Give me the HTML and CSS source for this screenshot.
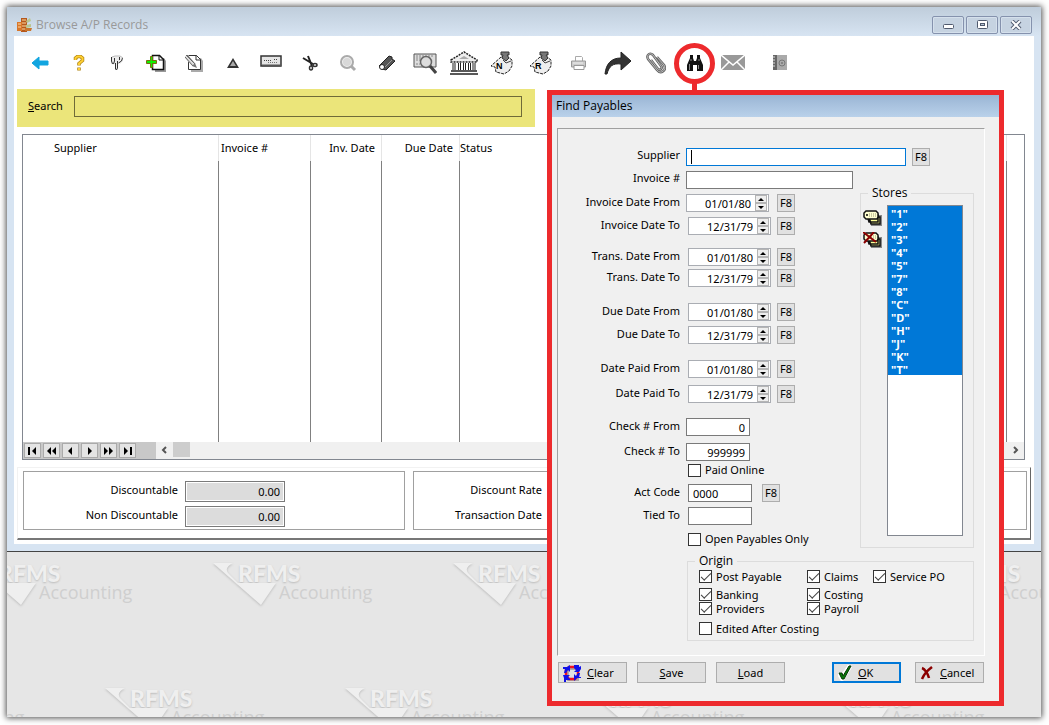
FILE: index.html
```html
<!DOCTYPE html>
<html lang="en">
<head>
<meta charset="UTF-8" />
<title>Browse A/P Records</title>
<link rel="stylesheet" href="styles.css">
</head>
<body>

<div class="screen">
  <main class="window">
    <header class="titlebar">
      <svg class="app-icon" width="16" height="16" viewBox="0 0 16 16">
        <path d="M5 1h6v14H5z" fill="#b5581c"/><path d="M1 5h5v9H1z" fill="#d9772b"/>
        <path d="M6 3h4M6 6h4M6 9h4M6 12h4M2 7h3M2 10h3" stroke="#ffd9a0"/>
        <path d="M10 4l4-3 1 3-4 2zM10 8l5-1v3l-5 1z" fill="#b9c58f"/><path d="M9 11h7l-1 3H9z" fill="#c9762e"/>
      </svg>
      <h1>Browse A/P Records</h1>
      <div class="win-buttons">
        <button type="button" aria-label="Minimize"><svg width="12" height="10" viewBox="0 0 12 10"><rect x="1.500" y="4.500" width="10" height="4" rx="1" fill="#fff" stroke="#505a6e"/></svg></button>
        <button type="button" aria-label="Maximize"><svg width="12" height="10" viewBox="0 0 12 10"><rect x="1.500" y=".5" width="10" height="8" rx="1" fill="#fff" stroke="#505a6e"/><rect x="4.500" y="3.500" width="4" height="2" fill="#b8c6d6" stroke="#505a6e"/></svg></button>
        <button type="button" aria-label="Close"><svg width="12" height="10" viewBox="0 0 12 10"><path d="M2 1l8 8M10 1L2 9" stroke="#505a6e" stroke-width="4"/><path d="M2 1l8 8M10 1L2 9" stroke="#fff" stroke-width="2"/></svg></button>
      </div>
    </header>

    <div class="content">
      <nav class="toolbar">
        <button type="button" aria-label="Back"><svg width="18" height="14" viewBox="0 0 18 14"><path d="M1 7l7-6v4h9v4H8v4z" fill="#12a5e0" stroke="#12a5e0"/></svg></button>
        <button type="button" aria-label="Help"><svg width="12" height="16" viewBox="0 0 12 16"><path d="M2.500 5V3l2-1.500h3L9.500 3v2.500L6 8.500V10.500M6 12.500v3" fill="none" stroke="#b08410" stroke-width="3.500"/><path d="M2.500 5V3l2-1.500h3L9.500 3v2.500L6 8.500V10M6 13v2" fill="none" stroke="#ffd034" stroke-width="2"/></svg></button>
        <button type="button" aria-label="Select"><svg width="14" height="16" viewBox="0 0 14 16"><path d="M1 3l2-2h7l3 2v3l-3 3-2-1-1 5-1 2-1-2V9L3 10 1 7z" fill="#eee"/><path d="M1.500 2v4l1 3M4.500 3v3l-1 3M5.500 8v6l1 1 1-2V6M8.500 8l3-2 1-3M9.500 2v3" fill="none" stroke="#333"/><path d="M2 2l3-1h5l3 2" fill="none" stroke="#bbb"/></svg></button>
        <button type="button" aria-label="Insert"><svg width="20" height="18" viewBox="0 0 20 18"><path d="M9 4h9l2 3v11H9z" fill="#999"/><path d="M6.500 1.500h7l4 4v10h-11z" fill="#fff" stroke="#111" stroke-width="1.500"/><path d="M13 1v5h5" fill="none" stroke="#111"/><path d="M4.500 2.500h2v4h4v3h-4v4h-2v-4h-4v-3h4z" fill="#10f000" stroke="#7c6a10"/></svg></button>
        <button type="button" aria-label="Change"><svg width="18" height="18" viewBox="0 0 18 18"><path d="M6 4h10l2 3v11H6z" fill="#aaa"/><path d="M3.500 1.500h8l4 4v10h-12z" fill="#fff" stroke="#333"/><path d="M11 1v5h5" fill="none" stroke="#333"/><path d="M0 2l3-1 7 8-3 3-7-8z" fill="#ddd"/><path d="M1 1l9 9M0 3l8 9M2 1l8 9" stroke="#666"/><path d="M7 12l3-3 2 5z" fill="#777"/></svg></button>
        <button type="button" aria-label="Delete"><svg width="14" height="12" viewBox="0 0 14 12"><path d="M7 1l6 10H1z" fill="#333"/><path d="M7 4l3 5H4z" fill="#aaa"/></svg></button>
        <button type="button" aria-label="Check"><svg class="up" width="22" height="12" viewBox="0 0 22 12"><path d="M1 1h20v10H1z" fill="#e5e5e5" stroke="#333" stroke-width="1.500"/><path d="M4 5.500h8M14 4.500h4" stroke="#444" stroke-dasharray="1 1"/><path d="M8 7.500h10" stroke="#777" stroke-dasharray="1 1"/><path d="M2 10.500h19" stroke="#555" stroke-width="2"/></svg></button>
        <button type="button" aria-label="Cut"><svg width="16" height="16" viewBox="0 0 16 16"><path d="M1 3l10 6M6 1l4 10" stroke="#222" stroke-width="2"/><ellipse cx="13" cy="10" rx="2" ry="1.500" fill="none" stroke="#333" stroke-width="1.500"/><ellipse cx="9" cy="13" rx="1.500" ry="2" fill="none" stroke="#333" stroke-width="1.500"/></svg></button>
        <button type="button" aria-label="Preview"><svg width="18" height="18" viewBox="0 0 18 18"><circle cx="8" cy="8" r="6" fill="#eee" stroke="#aaa" stroke-width="2"/><circle cx="8" cy="8" r="4" fill="#d8d8d8"/><path d="M12 12l4 4" stroke="#aaa" stroke-width="3"/></svg></button>
        <button type="button" aria-label="Journal"><svg width="18" height="16" viewBox="0 0 18 16"><path d="M1 11L11 1l3 1v2l3 2-9 9-4-1z" fill="#555" stroke="#222"/><path d="M7 12l7-7" stroke="#999"/><circle cx="4" cy="12" r="2.500" fill="#fff" stroke="#222"/></svg></button>
        <button type="button" aria-label="View check"><svg width="24" height="22" viewBox="0 0 24 22"><path d="M1 2h22v13H1z" fill="#ddd" stroke="#555"/><path d="M3 4h18M3 6h6M3 8h4M3 12h4" stroke="#888" stroke-dasharray="2 1"/><circle cx="13" cy="10" r="5.500" fill="#ddd" stroke="#666" stroke-width="1.500"/><path d="M17 14l6 7" stroke="#444" stroke-width="3"/></svg></button>
        <button type="button" aria-label="Bank"><svg width="28" height="24" viewBox="0 0 28 24"><path d="M1 9l13-8 13 8v2H1z" fill="#eee" stroke="#222" stroke-width="1.500" stroke-dasharray="2 1"/><path d="M9 8l5-3 5 3z" fill="#aaa"/><path d="M4 12v7M9.500 12v7M14.500 12v7M19.500 12v7M24 12v7" stroke="#222" stroke-width="3"/><path d="M4 12v7M9.500 12v7M14.500 12v7M19.500 12v7M24 12v7" stroke="#fff"/><path d="M1 20h26M0 23h28" stroke="#222" stroke-width="1.500"/></svg></button>
        <button type="button" aria-label="New memo"><svg class="bag" width="24" height="24" viewBox="0 0 24 24"><path d="M11 6L1 15l4 1 1 5 8 2 5-3 3-5V9l-4-3z" fill="#eee" stroke="#222" stroke-dasharray="3 1"/><path d="M11 1h8v3h-2l2 3-3 3-4-3 1-3h-2z" fill="#777" stroke="#333"/><path d="M13 9l3 3 5-2" fill="none" stroke="#444"/><text x="6" y="18">N</text></svg></button>
        <button type="button" aria-label="Repeat memo"><svg class="bag" width="24" height="24" viewBox="0 0 24 24"><path d="M11 6L1 15l4 1 1 5 8 2 5-3 3-5V9l-4-3z" fill="#eee" stroke="#222" stroke-dasharray="3 1"/><path d="M11 1h8v3h-2l2 3-3 3-4-3 1-3h-2z" fill="#777" stroke="#333"/><path d="M13 9l3 3 5-2" fill="none" stroke="#444"/><text x="6" y="18">R</text></svg></button>
        <button type="button" aria-label="Print"><svg width="18" height="16" viewBox="0 0 18 16"><path d="M5.500 6V1.500h6l1 1V6" fill="#fff" stroke="#aaa"/><path d="M1.500 6h14v6h-14z" fill="#ccc" stroke="#999"/><path d="M4 10.500h10v4H4z" fill="#fff" stroke="#999"/><path d="M3 8h10" stroke="#eee"/></svg></button>
        <button type="button" aria-label="Forward"><svg width="28" height="24" viewBox="0 0 28 24"><path d="M1 23C2 13 7 7 17 7V1l10 9-10 9v-6C9 12 5 15 3 23z" fill="#333" stroke="#222"/></svg></button>
        <button type="button" aria-label="Attach"><svg width="20" height="22" viewBox="0 0 20 22"><path d="M5 8l7 9c2 2 5-1 3-3L7 3C4 0 0 3 2 7l9 11c4 5 10 0 7-5L11 5" fill="none" stroke="#666" stroke-width="2.500"/><path d="M5 8l7 9c2 2 5-1 3-3L7 3C4 0 0 3 2 7l9 11c4 5 10 0 7-5L11 5" fill="none" stroke="#bbb"/></svg></button>
        <button type="button" class="find" aria-label="Find"><svg width="18" height="18" viewBox="0 0 18 18"><path d="M4 1h3v3l1 3h2l1-3V1h3v3l3 7v6h-6v-6H7v6H1v-6l3-7z" fill="#111"/><path d="M3.500 10v6M12.500 11v4M5 5v2M13 5v2" stroke="#888"/></svg></button>
        <button type="button" aria-label="Mail"><svg width="24" height="15" viewBox="0 0 24 15"><path d="M0 0h24v15H0z" fill="#999"/><path d="M0 0l12 10L24 0M0 15l8-8M24 15l-8-8" fill="none" stroke="#fff" stroke-width="1.500"/></svg></button>
        <button type="button" class="apart" aria-label="Address book"><svg width="14" height="16" viewBox="0 0 14 16"><path d="M0 0h14v15H0z" fill="#aaa"/><path d="M0 0h4v15H0z" fill="#666"/><path d="M0 2h2M0 5h2M0 8h2M0 11h2" stroke="#ddd"/><circle cx="9" cy="8" r="3" fill="none" stroke="#777"/><circle cx="9" cy="8" r="1" fill="#777"/></svg></button>
      </nav>

      <div class="search">
        <label for="search"><u>S</u>earch</label>
        <input id="search" type="text">
      </div>

      <div class="browse">
        <table>
          <thead>
            <tr><th class="supplier">Supplier</th><th class="invoice">Invoice #</th><th class="inv-date">Inv. Date</th><th class="due-date">Due Date</th><th>Status</th><th class="end"></th></tr>
          </thead>
          <tbody>
            <tr><td></td><td></td><td></td><td></td><td></td><td></td></tr>
          </tbody>
        </table>
        <div class="nav-row">
          <div class="vcr">
            <button type="button" aria-label="First"><svg width="9" height="8" viewBox="0 0 9 8"><path d="M0 0h2v8H0zM8 0v8L4 4z"/></svg></button>
            <button type="button" aria-label="Page up"><svg width="11" height="8" viewBox="0 0 11 8"><path d="M5 0v8L1 4zM10 0v8L6 4z"/></svg></button>
            <button type="button" aria-label="Previous"><svg width="8" height="8" viewBox="0 0 8 8"><path d="M5 0v8L1 4z"/></svg></button>
            <button type="button" aria-label="Next"><svg width="8" height="8" viewBox="0 0 8 8"><path d="M2 0v8l4-4z"/></svg></button>
            <button type="button" aria-label="Page down"><svg width="11" height="8" viewBox="0 0 11 8"><path d="M1 0v8l4-4zM6 0v8l4-4z"/></svg></button>
            <button type="button" aria-label="Last"><svg width="9" height="8" viewBox="0 0 9 8"><path d="M1 0v8l4-4zM7 0h2v8H7z"/></svg></button>
          </div>
          <div class="scrollbar">
            <svg width="17" height="16" viewBox="0 0 17 16"><path d="M10 5L7 8l3 3" fill="none" stroke="#555" stroke-width="2"/></svg>
            <span class="thumb"></span>
            <svg class="right" width="17" height="16" viewBox="0 0 17 16"><path d="M7 5l3 3-3 3" fill="none" stroke="#555" stroke-width="2"/></svg>
          </div>
        </div>
      </div>

      <div class="summary">
        <div class="box amounts">
          <label for="disc">Discountable</label><input id="disc" type="text" value="0.00" readonly>
          <label for="nondisc">Non Discountable</label><input id="nondisc" type="text" value="0.00" readonly>
        </div>
        <div class="box rates">
          <span>Discount Rate</span>
          <span>Transaction Date</span>
        </div>
      </div>
    </div>
  </main>

  <div class="desktop" aria-hidden="true">
    <div class="marks">
      <div class="mark"><svg width="64" height="44" viewBox="0 0 64 44"><path d="M0 0h20q-10 5-4 11l9 9h38L48 42z"/></svg><b>RFMS</b><span>Accounting</span></div>
      <div class="mark"><svg width="64" height="44" viewBox="0 0 64 44"><path d="M0 0h20q-10 5-4 11l9 9h38L48 42z"/></svg><b>RFMS</b><span>Accounting</span></div>
      <div class="mark"><svg width="64" height="44" viewBox="0 0 64 44"><path d="M0 0h20q-10 5-4 11l9 9h38L48 42z"/></svg><b>RFMS</b><span>Accounting</span></div>
      <div class="mark"></div>
      <div class="mark"><svg width="64" height="44" viewBox="0 0 64 44"><path d="M0 0h20q-10 5-4 11l9 9h38L48 42z"/></svg><b>RFMS</b><span>Accounting</span></div>
    </div>
    <div class="marks shifted">
      <div class="mark"><svg width="64" height="44" viewBox="0 0 64 44"><path d="M0 0h20q-10 5-4 11l9 9h38L48 42z"/></svg><b>RFMS</b><span>Accounting</span></div>
      <div class="mark"><svg width="64" height="44" viewBox="0 0 64 44"><path d="M0 0h20q-10 5-4 11l9 9h38L48 42z"/></svg><b>RFMS</b><span>Accounting</span></div>
      <div class="mark"><svg width="64" height="44" viewBox="0 0 64 44"><path d="M0 0h20q-10 5-4 11l9 9h38L48 42z"/></svg><b>RFMS</b><span>Accounting</span></div>
      <div class="mark"><svg width="64" height="44" viewBox="0 0 64 44"><path d="M0 0h20q-10 5-4 11l9 9h38L48 42z"/></svg><b>RFMS</b><span>Accounting</span></div>
      <div class="mark"><svg width="64" height="44" viewBox="0 0 64 44"><path d="M0 0h20q-10 5-4 11l9 9h38L48 42z"/></svg><b>RFMS</b><span>Accounting</span></div>
    </div>
  </div>

  <form class="dialog">
    <h2>Find Payables</h2>
    <div class="panel">
      <div class="group">
        <div class="row wide"><label for="supplier">Supplier</label><input id="supplier" class="active" type="text"><button type="button" class="f8">F8</button></div>
        <div class="row"><label for="invoice">Invoice #</label><input id="invoice" class="invoice-no" type="text"></div>
      </div>
      <div class="columns">
        <div class="fields">
          <div class="group">
            <div class="row"><label for="inv-from">Invoice Date From</label><span class="date"><input id="inv-from" type="text" value="01/01/80"><span class="spin"><button type="button" aria-label="Up"></button><button type="button" aria-label="Down"></button></span></span><button type="button" class="f8">F8</button></div>
            <div class="row inset"><label for="inv-to">Invoice Date To</label><span class="date"><input id="inv-to" type="text" value="12/31/79"><span class="spin"><button type="button" aria-label="Up"></button><button type="button" aria-label="Down"></button></span></span><button type="button" class="f8">F8</button></div>
          </div>
          <div class="group tight">
            <div class="row inset"><label for="trans-from">Trans. Date From</label><span class="date"><input id="trans-from" type="text" value="01/01/80"><span class="spin"><button type="button" aria-label="Up"></button><button type="button" aria-label="Down"></button></span></span><button type="button" class="f8">F8</button></div>
            <div class="row inset"><label for="trans-to">Trans. Date To</label><span class="date"><input id="trans-to" type="text" value="12/31/79"><span class="spin"><button type="button" aria-label="Up"></button><button type="button" aria-label="Down"></button></span></span><button type="button" class="f8">F8</button></div>
          </div>
          <div class="group spaced">
            <div class="row inset"><label for="due-from">Due Date From</label><span class="date"><input id="due-from" type="text" value="01/01/80"><span class="spin"><button type="button" aria-label="Up"></button><button type="button" aria-label="Down"></button></span></span><button type="button" class="f8">F8</button></div>
            <div class="row inset"><label for="due-to">Due Date To</label><span class="date"><input id="due-to" type="text" value="12/31/79"><span class="spin"><button type="button" aria-label="Up"></button><button type="button" aria-label="Down"></button></span></span><button type="button" class="f8">F8</button></div>
          </div>
          <div class="group spaced loose">
            <div class="row inset"><label for="paid-from">Date Paid From</label><span class="date"><input id="paid-from" type="text" value="01/01/80"><span class="spin"><button type="button" aria-label="Up"></button><button type="button" aria-label="Down"></button></span></span><button type="button" class="f8">F8</button></div>
            <div class="row inset"><label for="paid-to">Date Paid To</label><span class="date"><input id="paid-to" type="text" value="12/31/79"><span class="spin"><button type="button" aria-label="Up"></button><button type="button" aria-label="Down"></button></span></span><button type="button" class="f8">F8</button></div>
          </div>
          <div class="group checks loose">
            <div class="row"><label for="check-from">Check # From</label><input id="check-from" class="short number" type="text" value="0"></div>
            <div class="row"><label for="check-to">Check # To</label><input id="check-to" class="short number" type="text" value="999999"></div>
          </div>
          <div class="group">
            <div class="row inset"><span class="check"><input id="online" type="checkbox"><label for="online">Paid Online</label></span></div>
            <div class="row inset act"><label for="act">Act Code</label><input id="act" class="short" type="text" value="0000"><button type="button" class="f8">F8</button></div>
            <div class="row inset"><label for="tied">Tied To</label><input id="tied" class="short" type="text"></div>
            <div class="row inset"><span class="check"><input id="open" type="checkbox"><label for="open">Open Payables Only</label></span></div>
          </div>
        </div>
        <fieldset class="stores">
          <legend>Stores</legend>
          <div class="tag-buttons">
            <button type="button" aria-label="Tag all"><svg width="19" height="16" viewBox="0 0 19 16"><path d="M7 5h12v11H8z" fill="#888"/><path d="M6 7h11v7H8zM4 5h11v7H6z" fill="#ff9" stroke="#111" stroke-width="1.500"/><path d="M3 1h10l2 2v4l-1 2H3L1 7V3z" fill="#ffffd0" stroke="#111" stroke-width="1.500"/><path d="M6 4h7M6 6h7" stroke="#997" stroke-dasharray="1 1"/><circle cx="4" cy="5" r="1"/></svg></button>
            <button type="button" aria-label="Untag all"><svg width="19" height="16" viewBox="0 0 19 16"><path d="M7 5h12v11H8z" fill="#888"/><path d="M6 7h11v7H8zM4 5h11v7H6z" fill="#ff9" stroke="#111" stroke-width="1.500"/><path d="M3 1h10l2 2v4l-1 2H3L1 7V3z" fill="#ffffd0" stroke="#111" stroke-width="1.500"/><path d="M6 4h7M6 6h7" stroke="#997" stroke-dasharray="1 1"/><path d="M0 0l13 10M11 0L1 11" stroke="#8b0000" stroke-width="2"/></svg></button>
          </div>
          <select multiple aria-label="Stores">
            <option selected>"1"</option>
            <option selected>"2"</option>
            <option selected>"3"</option>
            <option selected>"4"</option>
            <option selected>"5"</option>
            <option selected>"7"</option>
            <option selected>"8"</option>
            <option selected>"C"</option>
            <option selected>"D"</option>
            <option selected>"H"</option>
            <option selected>"J"</option>
            <option selected>"K"</option>
            <option selected>"T"</option>
          </select>
        </fieldset>
      </div>
      <fieldset class="origin">
        <legend>Origin</legend>
        <div class="origin-grid">
          <span class="check"><input id="o1" type="checkbox" checked><label for="o1">Post Payable</label></span>
          <span class="check"><input id="o2" type="checkbox" checked><label for="o2">Claims</label></span>
          <span class="check"><input id="o3" type="checkbox" checked><label for="o3">Service PO</label></span>
          <span class="check first"><input id="o4" type="checkbox" checked><label for="o4">Banking</label></span>
          <span class="check"><input id="o5" type="checkbox" checked><label for="o5">Costing</label></span>
          <span class="check first"><input id="o6" type="checkbox" checked><label for="o6">Providers</label></span>
          <span class="check"><input id="o7" type="checkbox" checked><label for="o7">Payroll</label></span>
          <span class="check last"><input id="o8" type="checkbox"><label for="o8">Edited After Costing</label></span>
        </div>
      </fieldset>
    </div>
    <div class="actions">
      <button type="button" class="iconed"><svg width="18" height="18" viewBox="0 0 18 18"><path d="M5 5h10v11H5z" fill="none" stroke="#aaa" stroke-width="2"/><path d="M6 3h6l3 3v6l-3 3H6l-3-3V6z" fill="none" stroke="#f01020" stroke-width="2.500"/><path d="M0 3h4l3-2v7L5 6 3 9H1l1-4H0zM11 1h5v2l2-1v3l-2 3h-5l2-2-2-2zM18 14h-4l-3 3v-7l2 2 2-3h2l-1 4h2zM7 16H3v2H1v-4l-1-3h7l-2 2 2 2z" fill="#1010e8"/></svg><span><u>C</u>lear</span></button>
      <button type="button"><span><u>S</u>ave</span></button>
      <button type="button"><span><u>L</u>oad</span></button>
      <button type="button" class="iconed ok"><svg width="14" height="16" viewBox="0 0 14 16"><path d="M1 8l3 5L12 1" fill="none" stroke="#fff" stroke-width="5"/><path d="M1 8h3l1 3 6-10h2L6 14H4z" fill="#0a7a0a" stroke="#053805"/></svg><span><u>O</u>K</span></button>
      <button type="button" class="iconed"><svg width="14" height="14" viewBox="0 0 14 14"><path d="M2 2c3 1 6 6 7 10M12 1C8 4 4 8 2 13" fill="none" stroke="#8b0000" stroke-width="2.500"/></svg><span><u>C</u>ancel</span></button>
    </div>
  </form>
</div>

</body>
</html>
```
FILE: styles.css
```css
*, *::before, *::after {
    box-sizing: border-box;
}
body {
    margin: 0;
    padding: 7px 8px 8px 7px;
    background: #fff;
    color: #000;
    font: 11px/14px "Noto Sans", "Open Sans", sans-serif;
}
input, button, select {
    font: inherit;
    color: inherit;
    margin: 0;
    padding: 0;
}
svg {
    display: block;
    flex: none;
}
.screen {
    position: relative;
    display: flex;
    flex-direction: column;
    height: calc(100vh - 15px);
    min-height: 708px;
    background: #e6e6e6;
    box-shadow: 0 0 6px 1px rgba(0,0,0,0.7);
}

/* browse window */
.window {
    background: #d7e4f2;
    border-bottom: 1px solid #444;
    padding: 0 7px 7px;
}
.titlebar {
    display: flex;
    align-items: center;
    gap: 4px;
    height: 29px;
    margin: 0 -7px;
    padding: 6px 9px 0 9px;
    background: linear-gradient(#bfcddb, #d7e4f2);
}
.titlebar h1 {
    margin: 0;
    font: 12px/14px "Open Sans", sans-serif;
    color: #999;
}
.win-buttons {
    display: flex;
    gap: 2px;
    margin-left: auto;
}
.win-buttons button {
    display: flex;
    align-items: center;
    justify-content: center;
    width: 32px;
    height: 18px;
    border: 1px solid #8592ad;
    border-radius: 2px;
    background: #c6d3e1;
    box-shadow: inset 0 0 0 1px #d5e0ec;
}
.content {
    background: #fff;
    padding: 0 3px 4px;
}
.toolbar {
    display: flex;
    align-items: center;
    height: 53px;
    padding-left: 4px;
}
.toolbar button {
    display: flex;
    align-items: center;
    justify-content: center;
    flex: none;
    width: 38px;
    height: 30px;
    border: 0;
    background: none;
}
.toolbar button:nth-child(even) {
    width: 39px;
}
.toolbar .apart {
    margin-left: 8px;
}
.toolbar .up {
    margin-bottom: 4px;
}
.bag text {
    font: bold 9px "Liberation Sans", sans-serif;
}
.toolbar .find {
    position: relative;
}
.find::before {
    content: "";
    position: absolute;
    left: -1px;
    top: -5px;
    width: 41px;
    height: 41px;
    border: 5px solid #ed2a2d;
    border-radius: 50%;
}
.find::after {
    content: "";
    position: absolute;
    left: 17px;
    top: 34px;
    width: 5px;
    height: 9px;
    background: #ed2a2d;
}
.search {
    display: flex;
    align-items: center;
    gap: 11px;
    width: 518px;
    height: 38px;
    padding: 0 13px 3px 11px;
    background: #ebe57a;
}
.search label {
    padding-bottom: 2px;
}
.search input {
    flex: 1;
    height: 21px;
    border: 1px solid #6f6b38;
    background: transparent;
}
.browse {
    margin: 7px 6px 7px 5px;
    border: 1px solid #828790;
}
.browse table {
    width: 100%;
    table-layout: fixed;
    border-collapse: separate;
    border-spacing: 0;
}
.browse th {
    height: 26px;
    padding: 0 2px;
    border-right: 1px solid #e5e5e5;
    font-weight: normal;
    text-align: left;
}
.browse td {
    height: 281px;
    border-right: 1px solid #808080;
}
.browse th:last-child, .browse td:last-child {
    border-right: 0;
}
.browse .supplier {
    width: 196px;
    padding-left: 31px;
}
.browse .invoice {
    width: 92px;
}
.browse .inv-date {
    width: 71px;
    padding-right: 6px;
    text-align: right;
}
.browse .due-date {
    width: 78px;
    padding-right: 6px;
    text-align: right;
}
.browse th:nth-child(5) {
    padding-left: 0;
}
.browse .end {
    width: 17px;
}
.nav-row {
    display: flex;
    height: 17px;
}
.vcr {
    display: flex;
    gap: 2px;
    width: 133px;
    padding: 1px;
    background: #c8c8c8;
}
.vcr button {
    display: flex;
    align-items: center;
    justify-content: center;
    width: 17px;
    height: 15px;
    border: 1px solid #aaa;
    background: #e4e4e4;
}
.scrollbar {
    display: flex;
    flex: 1;
    background: #f0f0f0;
}
.thumb {
    width: 17px;
    height: 15px;
    background: #cdcdcd;
}
.scrollbar .right {
    margin-left: auto;
}
.summary {
    display: flex;
    gap: 8px;
    padding: 3px 3px 8px 5px;
    border: 1px solid #f2f2f2;
    border-right: 1px solid #666;
    border-bottom: 2px solid #777;
}
.box {
    height: 59px;
    border: 1px solid #a0a0a0;
}
.amounts {
    display: grid;
    grid-template-columns: 154px 100px;
    gap: 4px 7px;
    align-content: start;
    width: 382px;
    padding-top: 9px;
    text-align: right;
}
.amounts input {
    height: 21px;
    padding: 0 4px;
    border: 1px solid #7a7a7a;
    background: #dcdcdc;
    box-shadow: inset 0 0 0 1px #fff;
    text-align: right;
}
.amounts label {
    padding-top: 2px;
}
.rates {
    display: flex;
    flex-direction: column;
    flex: 1;
    gap: 11px;
    padding: 11px 484px 0 0;
    text-align: right;
}

/* watermarked desktop */
.desktop {
    flex: 1;
    min-height: 0;
    overflow: hidden;
    padding-top: 11px;
}
.marks {
    display: flex;
    height: 125px;
    margin-left: -34px;
}
.marks.shifted {
    margin-left: -142px;
}
.mark {
    display: grid;
    grid-template-columns: 25px 41px auto;
    grid-template-rows: 19px 22px;
    flex: none;
    width: 240px;
    height: 44px;
}
.mark svg {
    grid-area: 1 / 1 / 3 / 3;
    fill: #efefef;
    filter: drop-shadow(0 1px 1px #bbb);
}
.mark b {
    grid-area: 1 / 2 / 2 / 4;
    font: 900 23px/20px Lato, sans-serif;
    color: #efefef;
    text-shadow: 0 1px 2px #bbb;
}
.mark span {
    grid-area: 2 / 3;
    font: 18px/20px "Open Sans", sans-serif;
    color: #cfcfcf;
}

/* find dialog */
.dialog {
    position: absolute;
    left: 540px;
    top: 83px;
    width: 457px;
    border: 5px solid #ed2a2d;
    background: #f0f0f0;
}
.dialog h2 {
    margin: 0;
    padding: 0 4px;
    background: linear-gradient(#9ab5d4, #b9d1ea);
    font: 12px/22px "Open Sans", sans-serif;
}
.panel {
    margin: 11px 14px 6px 5px;
    padding: 19px 10px 14px 0;
    border: 1px solid #a0a0a0;
    border-right-color: #fff;
    border-bottom-color: #fff;
}
.group {
    display: grid;
    gap: 5px;
}
.columns {
    display: flex;
    justify-content: space-between;
}
.fields {
    padding-top: 5px;
}
.tight {
    gap: 3px;
    margin-top: 13px;
}
.spaced {
    margin-top: 16px;
}
.checks {
    margin-top: 15px;
}
.loose {
    gap: 7px;
}
.row {
    display: grid;
    grid-template-columns: 122px 85px auto;
    column-gap: 6px;
    justify-content: start;
    height: 18px;
}
.row.wide {
    grid-template-columns: 122px 220px auto;
}
.row.act {
    grid-template-columns: 122px 70px auto;
}
.row > label {
    text-align: right;
}
.fields .row > label {
    padding-top: 1px;
}
.row input {
    height: 18px;
    padding: 0 4px;
    border: 1px solid #7a7a7a;
    background: #fff;
}
.row .active {
    border-color: #0078d7;
    /* text cursor */
    background: linear-gradient(#000, #000) 4px 1px / 1px 14px no-repeat #fff;
}
.row .invoice-no {
    width: 167px;
}
.row .short {
    width: 64px;
}
.row .number {
    text-align: right;
}
.inset > .date, .inset > .short, .inset > .check {
    margin-left: 2px;
}
.row > .check {
    grid-column: 2 / 4;
}
.date {
    display: flex;
    width: 83px;
    height: 18px;
    padding-right: 1px;
    border: 1px solid #aaadb3;
    background: #fff;
}
.row .date input {
    flex: 1;
    min-width: 0;
    height: 16px;
    padding: 0 4px;
    border: 0;
    text-align: right;
}
.spin {
    display: flex;
    flex-direction: column;
    width: 12px;
}
.spin button {
    display: flex;
    align-items: center;
    justify-content: center;
    flex: 1;
    min-height: 0;
    border: 1px solid #b5b5b5;
    background: #eee;
}
.spin button::before {
    content: "";
    border: 3px solid transparent;
    border-top: 0;
    border-bottom-color: #000;
}
.spin button:last-child::before {
    transform: rotate(180deg);
}
.f8 {
    width: 18px;
    height: 18px;
    border: 1px solid #adadad;
    background: #e1e1e1;
}
.check {
    display: flex;
    align-items: center;
    gap: 4px;
    white-space: nowrap;
}
.check input {
    display: grid;
    place-items: center;
    appearance: none;
    flex: none;
    width: 13px;
    height: 13px;
    padding: 0;
    border: 1px solid #333;
    background: #fff;
}
.check input:checked::before {
    content: "";
    width: 10px;
    height: 5px;
    margin-bottom: 3px;
    border: solid #444;
    border-width: 0 0 1px 1px;
    transform: rotate(-45deg);
}
fieldset {
    min-width: 0;
    margin: 0;
    border: 1px solid #dcdcdc;
}
legend {
    padding: 0 4px;
    font: 12px/8px "Open Sans", sans-serif;
}
.stores {
    display: flex;
    gap: 5px;
    width: 114px;
    padding: 8px 10px 11px 2px;
}
.stores legend {
    margin-left: 5px;
}
.tag-buttons {
    display: grid;
    gap: 6px;
    align-content: start;
    padding-top: 5px;
}
.tag-buttons button {
    border: 0;
    background: none;
}
.stores select {
    flex: 1;
    min-width: 0;
    border: 1px solid #828790;
    border-radius: 0;
    background: #fff;
    overflow: hidden;
}
.stores option {
    height: 13px;
    min-height: 13px;
    padding: 0 3px;
    font: bold 11px/12px "Noto Sans", "Open Sans", sans-serif;
}
.stores option:checked {
    background: #0078d7 linear-gradient(#0078d7, #0078d7);
    color: #fff;
    -webkit-text-fill-color: #fff;
}
.origin {
    margin: 9px 0 0 129px;
    padding: 5px 0 5px 11px;
}
.origin legend {
    margin-left: -4px;
}
.origin-grid {
    display: grid;
    grid-template-columns: 108px 66px auto;
    grid-template-rows: 18px 14px 20px 13px;
    align-items: start;
}
.origin-grid .check {
    height: 13px;
}
.origin-grid .first {
    grid-column: 1;
}
.origin-grid .last {
    grid-column: 1 / 4;
}
.actions {
    display: flex;
    gap: 10px;
    padding: 0 15px 18px 6px;
}
.actions button {
    display: flex;
    align-items: center;
    justify-content: center;
    width: 69px;
    height: 21px;
    border: 1px solid #adadad;
    background: #e1e1e1;
}
.actions .iconed {
    justify-content: flex-start;
    gap: 6px;
    padding-left: 4px;
}
.actions .ok {
    margin: 0 4px 0 auto;
    border: 2px solid #0078d7;
}
```
